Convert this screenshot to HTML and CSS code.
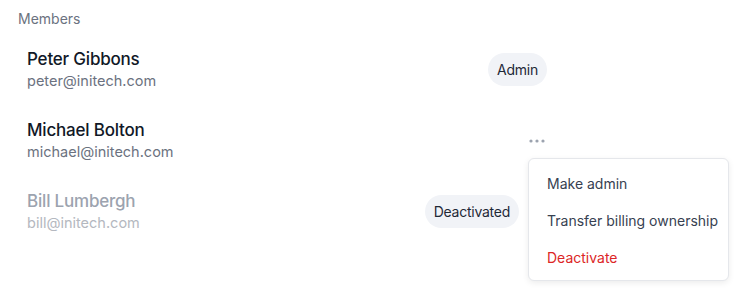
FILE: index.html
```html
<!DOCTYPE html>
<html lang="en">

<head>
    <meta charset="UTF-8">
    <meta name="viewport" content="width=device-width, initial-scale=1.0">
    <title>Members</title>
    <link rel="stylesheet" href="styles.css">
</head>

<body>
    <div class="members">
        <h2 class="members-title">Members</h2>

        <ul class="member-list">
            <li class="member">
                <div class="member-info">
                    <div class="member-name">Peter Gibbons</div>
                    <div class="member-email">peter@initech.com</div>
                </div>
                <div class="member-actions">
                    <span class="badge">Admin</span>
                </div>
            </li>

            <li class="member">
                <div class="member-info">
                    <div class="member-name">Michael Bolton</div>
                    <div class="member-email">michael@initech.com</div>
                </div>
                <div class="member-actions">
                    <div class="menu-wrap">
                        <button class="dots-btn" aria-label="Options">
                            <svg width="16" height="4" viewBox="0 0 16 4">
                                <circle cx="2" cy="2" r="1.6" />
                                <circle cx="8" cy="2" r="1.6" />
                                <circle cx="14" cy="2" r="1.6" />
                            </svg>
                        </button>
                        <div class="menu">
                            <div class="menu-item">Make admin</div>
                            <div class="menu-item">Transfer billing ownership</div>
                            <div class="menu-item danger">Deactivate</div>
                        </div>
                    </div>
                </div>
            </li>

            <li class="member inactive">
                <div class="member-info">
                    <div class="member-name">Bill Lumbergh</div>
                    <div class="member-email">bill@initech.com</div>
                </div>
                <div class="member-actions">
                    <span class="badge">Deactivated</span>
                    <button class="dots-btn" aria-label="Options">
                        <svg width="16" height="4" viewBox="0 0 16 4">
                            <circle cx="2" cy="2" r="1.6" />
                            <circle cx="8" cy="2" r="1.6" />
                            <circle cx="14" cy="2" r="1.6" />
                        </svg>
                    </button>
                </div>
            </li>
        </ul>
    </div>
</body>

</html>
```

FILE: styles.css
```css
body {
    margin: 0;
    min-height: 301px;
    font-family: Inter, "Noto Sans", sans-serif;
    background: #fff;
    color: #111827;
}

.members {
    width: 547px;
    padding: 9px 0 54px;
}

.members-title {
    margin: 0 0 5px 18px;
    font-size: 14px;
    line-height: 20px;
    font-weight: 400;
    color: #6b7280;
}

.member-list {
    list-style: none;
    margin: 0;
    padding: 0 0 0 27px;
}

.member {
    display: flex;
    align-items: center;
    justify-content: space-between;
    height: 71px;
}

.member-name {
    font-size: 17px;
    line-height: 22px;
    font-weight: 500;
    color: #111827;
    letter-spacing: -0.2px;
}

.member-email {
    font-size: 14.5px;
    line-height: 22px;
    color: #6b7280;
}

.member.inactive .member-name {
    color: #9ca3af;
}

.member.inactive .member-email {
    color: #b4b8c0;
}

.member-actions {
    display: flex;
    align-items: center;
    gap: 8px;
}

.badge {
    display: inline-block;
    height: 33px;
    line-height: 33px;
    padding: 0 9px;
    border-radius: 17px;
    background: #f1f3f7;
    font-size: 14px;
    font-weight: 400;
    letter-spacing: -0.25px;
    color: #1f2937;
}

.menu-wrap {
    position: relative;
}

.dots-btn {
    display: flex;
    align-items: center;
    justify-content: center;
    width: 20px;
    height: 20px;
    padding: 0;
    border: none;
    background: none;
    cursor: pointer;
}

.dots-btn svg {
    fill: #9ca3af;
}

.menu {
    position: absolute;
    top: 27px;
    left: 1px;
    z-index: 10;
    width: 199px;
    padding: 6px 0 4px;
    background: #fff;
    border: 1px solid #e5e7eb;
    border-radius: 6px;
    box-shadow: 0 2px 6px rgba(0, 0, 0, 0.08);
}

.menu-item {
    height: 37px;
    line-height: 37px;
    padding-left: 18px;
    font-size: 14px;
    color: #374151;
    white-space: nowrap;
}

.menu-item.danger {
    color: #dc2626;
}
```
